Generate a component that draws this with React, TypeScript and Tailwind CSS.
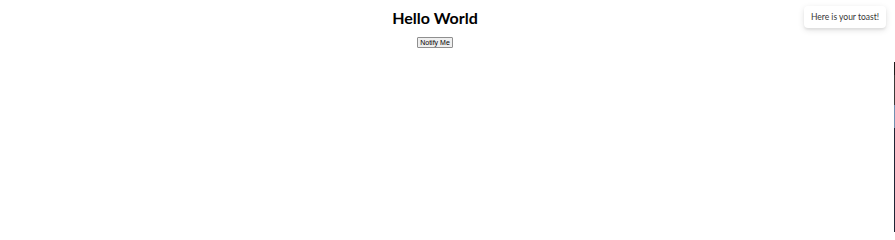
import React from "react";

export default function App() {
  return (
    <div className="relative flex h-[232px] w-full overflow-hidden bg-white">
      <div className="flex flex-1 flex-col items-center pr-[24px]">
        <h1 className="mt-[8px] text-[16px] font-bold leading-[20px] text-black [font-family:Lato,'Noto_Sans',sans-serif]">
          Hello World
        </h1>
        <button className="mt-[9px] h-[11px] rounded-[1px] border border-[#8f8f8f] bg-[#efefef] px-[2px] text-[7px] leading-[9px] text-black [font-family:'Liberation_Sans',Arial,sans-serif]">
          Notify Me
        </button>
      </div>
      <div className="flex w-px flex-col pt-[62px]">
        <div className="h-[13px] bg-[#1c1c1c]" />
        <div className="h-[30px] bg-[#3a3a3a]" />
        <div className="h-[23px] bg-[#7090b0]" />
        <div className="flex-1 bg-[#1f2536]" />
      </div>
      <div className="absolute right-[9px] top-[6px] flex h-[22px] w-[82px] items-center justify-center rounded-[4px] bg-white shadow-[0_2px_6px_rgba(0,0,0,0.12),0_2px_2px_rgba(0,0,0,0.05)]">
        <span className="text-[8.5px] leading-[12px] text-[#363636] [font-family:Lato,'Noto_Sans',sans-serif]">
          Here is your toast!
        </span>
      </div>
    </div>
  );
}
